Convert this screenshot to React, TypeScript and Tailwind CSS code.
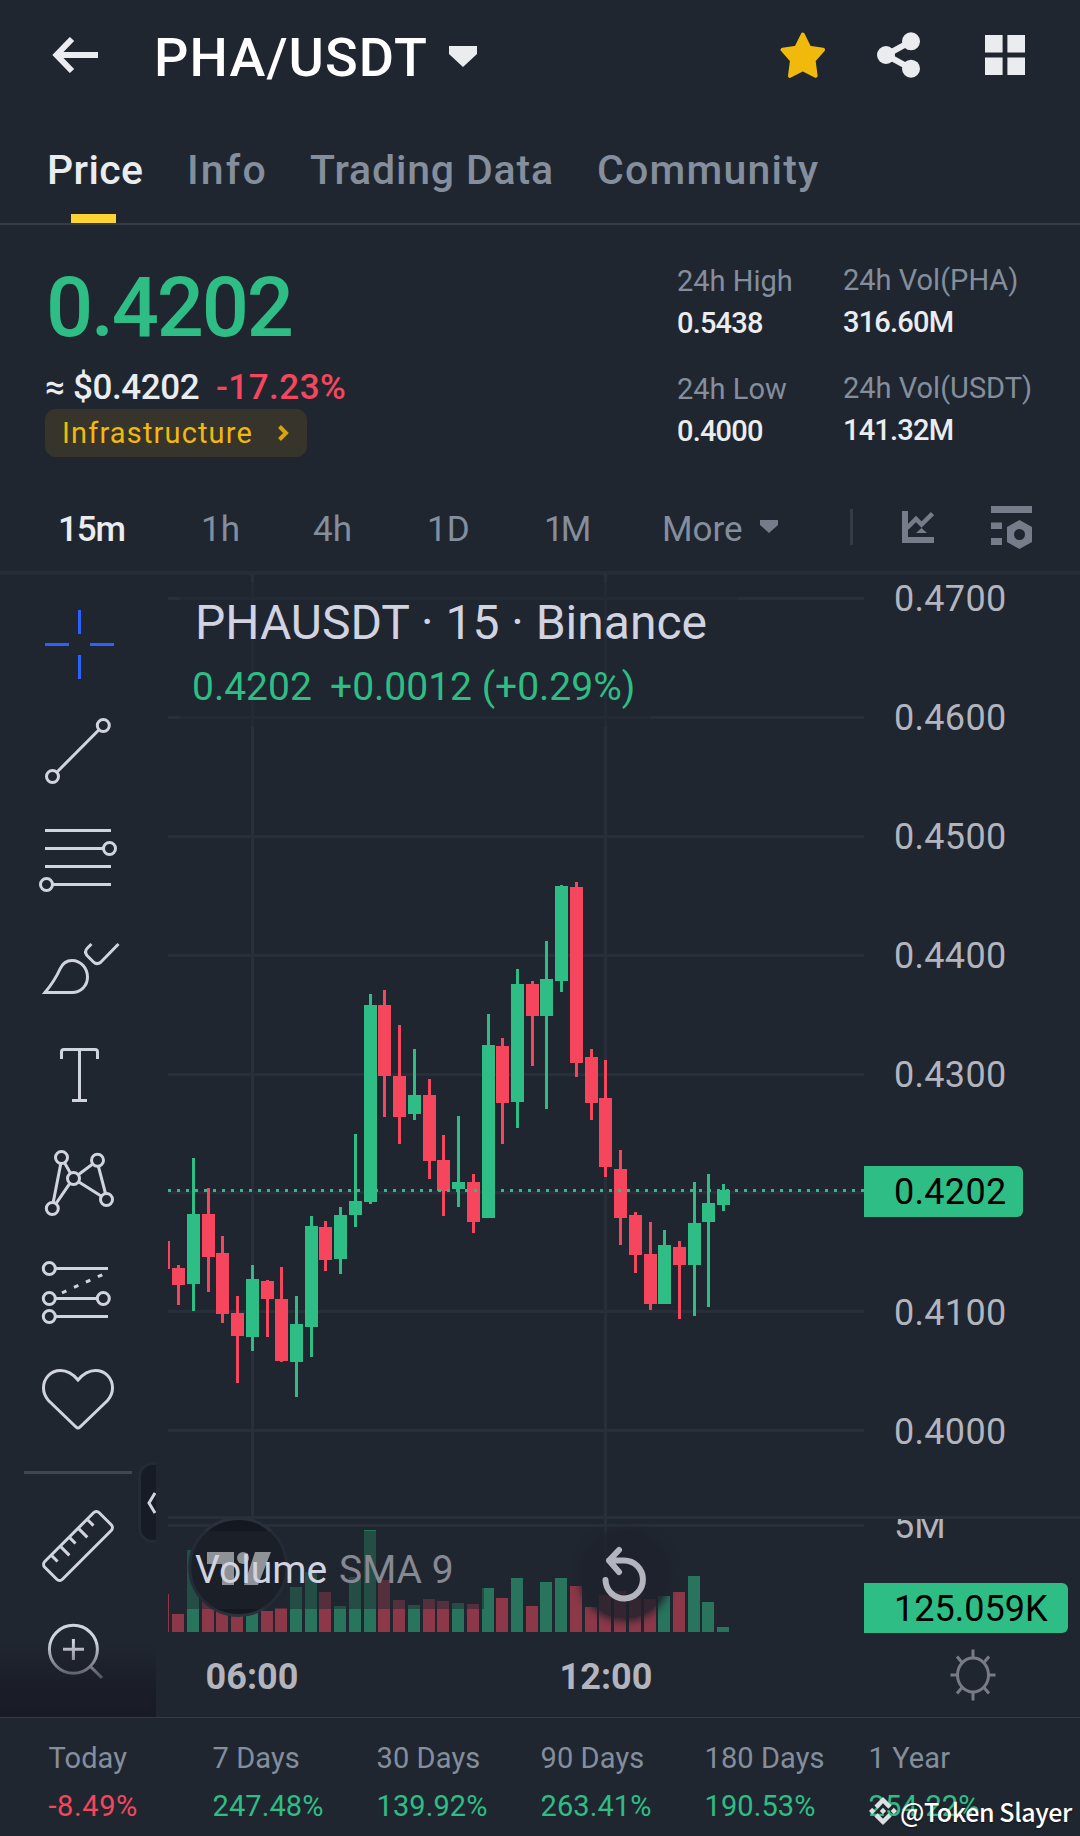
import React, { useState } from 'react';
import { SiBinance } from 'react-icons/si';

const UP = '#2ebd85';
const DOWN = '#f6465d';

const tabs = [
  { label: 'Price', className: 'w-[140px] tracking-[0.37px]' },
  { label: 'Info', className: 'w-[123px] tracking-[2.2px]' },
  { label: 'Trading Data', className: 'w-[287px] tracking-[0.84px]' },
  { label: 'Community', className: 'tracking-[1.23px]' },
];

const intervals = [
  { label: '15m', className: 'w-[143px] tracking-[-1.2px]' },
  { label: '1h', className: 'w-[112px]' },
  { label: '4h', className: 'w-[114px]' },
  { label: '1D', className: 'w-[117px]' },
  { label: '1M', className: 'w-[118px] tracking-[-3px]' },
  { label: 'More', className: 'w-[98px]' },
];

const stats = [
  [
    { label: '24h High', value: '0.5438' },
    { label: '24h Low', value: '0.4000' },
  ],
  [
    { label: '24h Vol(PHA)', value: '316.60M' },
    { label: '24h Vol(USDT)', value: '141.32M' },
  ],
];

const performance = [
  { label: 'Today', value: '-8.49%' },
  { label: '7 Days', value: '247.48%' },
  { label: '30 Days', value: '139.92%' },
  { label: '90 Days', value: '263.41%' },
  { label: '180 Days', value: '190.53%' },
  { label: '1 Year', value: '254.22%' },
];

const priceTicks = ['0.4700', '0.4600', '0.4500', '0.4400', '0.4300', '0.4202', '0.4100', '0.4000'];
const LAST_PRICE = '0.4202';

// x, high, body top, body bottom, low, volume top, rising
type Candle = [number, number, number, number, number, number, boolean];

const candles: Candle[] = [
  [178.5, 1265, 1268, 1285, 1305, 1614, false],
  [193.5, 1158, 1214, 1284, 1311, 1550, true],
  [208.5, 1188, 1214, 1257, 1292, 1598, false],
  [222.5, 1236, 1253, 1314, 1323, 1610, false],
  [237.5, 1296, 1313, 1336, 1383, 1614, false],
  [252.5, 1265, 1279, 1337, 1351, 1611, true],
  [267.5, 1280, 1281, 1299, 1337, 1611, false],
  [281.5, 1267, 1299, 1361, 1362, 1608, false],
  [296.5, 1296, 1324, 1362, 1397, 1587, true],
  [311.5, 1216, 1226, 1327, 1357, 1572, true],
  [325.5, 1221, 1227, 1260, 1271, 1592, false],
  [340.5, 1207, 1215, 1259, 1274, 1606, true],
  [355.5, 1134, 1201, 1215, 1227, 1577, true],
  [370.5, 994, 1005, 1202, 1204, 1530, true],
  [384.5, 990, 1005, 1076, 1117, 1580, false],
  [399.5, 1025, 1076, 1117, 1144, 1600, false],
  [414.5, 1049, 1095, 1114, 1120, 1605, true],
  [429.5, 1079, 1095, 1161, 1179, 1599, false],
  [443.5, 1135, 1160, 1191, 1216, 1601, false],
  [458.5, 1116, 1182, 1189, 1207, 1603, true],
  [473.5, 1174, 1182, 1222, 1233, 1604, false],
  [488.5, 1014, 1045, 1218, 1218, 1588, true],
  [502.5, 1038, 1046, 1103, 1144, 1598, false],
  [517.5, 969, 984, 1102, 1128, 1578, true],
  [532.5, 981, 984, 1016, 1066, 1606, false],
  [546.5, 941, 979, 1016, 1109, 1582, true],
  [561.5, 885, 886, 981, 992, 1578, true],
  [576.5, 882, 887, 1063, 1077, 1586, false],
  [591.5, 1049, 1057, 1103, 1120, 1607, false],
  [605.5, 1060, 1098, 1167, 1177, 1595, false],
  [620.5, 1150, 1169, 1218, 1245, 1591, false],
  [635.5, 1212, 1215, 1255, 1273, 1598, false],
  [650.5, 1222, 1254, 1304, 1310, 1599, false],
  [664.5, 1230, 1245, 1304, 1304, 1596, true],
  [679.5, 1241, 1247, 1265, 1319, 1592, false],
  [694.5, 1182, 1223, 1265, 1316, 1576, true],
  [708.5, 1174, 1203, 1222, 1307, 1602, true],
  [723.5, 1184, 1190, 1205, 1211, 1627, true],
];

const gridRows = [597, 716, 835, 954, 1073, 1191, 1310, 1429];
const gridCols = [251, 604];

const Caret = ({ className }: { className: string }) => (
  <svg viewBox="0 0 28 21" preserveAspectRatio="none" className={className} fill="currentColor">
    <path d="M0 0H28V8L14 21 0 8Z" />
  </svg>
);

const Header = () => (
  <header className="flex h-[110px] items-center text-[#eaecef]">
    <svg viewBox="0 0 46 36" className="ml-[52px] h-[36px] w-[46px]" fill="none" stroke="currentColor" strokeWidth="6">
      <path d="M46 18H5M20 2 4.5 18 20 34" />
    </svg>
    <h1 className="ml-[56px] w-[295px] pt-[6px] text-[54px] font-medium leading-none tracking-[1.12px] text-white">PHA/USDT</h1>
    <Caret className="mt-[2px] h-[21px] w-[28px]" />
    <svg viewBox="0 0 46 48" className="ml-[303px] h-[48px] w-[46px] text-[#f0b90b]" fill="currentColor" stroke="currentColor" strokeWidth="4" strokeLinejoin="round">
      <path d="M22.8 3.5 29.2 16.7 43 18.7 33.6 29.5 35.6 44.8 22.8 38.2 10 44.8 12 29.5 2.6 18.7 16.4 16.7Z" />
    </svg>
    <svg viewBox="0 0 43 46" className="ml-[51px] h-[46px] w-[43px]" fill="currentColor">
      <path d="M34 9.3 9 23 34 36.7" fill="none" stroke="currentColor" strokeWidth="6" />
      <circle cx="9" cy="23" r="9" />
      <circle cx="34" cy="9.3" r="9" />
      <circle cx="34" cy="36.7" r="9" />
    </svg>
    <svg viewBox="0 0 40 40" className="ml-[65px] h-[40px] w-[40px]" fill="currentColor">
      <path d="M0 0h17.6v17.6H0zM22.4 0H40v17.6H22.4zM0 22.4h17.6V40H0zM22.4 22.4H40V40H22.4z" />
    </svg>
  </header>
);

const Tabs = () => {
  const [active, setActive] = useState('Price');
  return (
    <nav className="flex h-[115px] whitespace-nowrap border-b-2 border-[#333b47] pl-[47px] text-[41px] font-medium">
      {tabs.map(({ label, className }) => (
        <button
          key={label}
          onClick={() => setActive(label)}
          className={`relative pt-[8px] text-left ${className} ${active === label ? 'text-[#eaecef]' : 'text-[#848e9c]'}`}
        >
          {label}
          {active === label && <span className="absolute bottom-0 left-[24px] h-[9px] w-[45px] bg-[#fcd535]" />}
        </button>
      ))}
    </nav>
  );
};

const PriceSummary = () => (
  <section className="flex h-[262px]">
    <div className="w-[677px] shrink-0 pl-[45px] pt-[33px] font-medium">
      <div className="h-[107px] pl-px text-[83px] leading-[100px] tracking-[-2.2px] text-[#2ebd85]">0.4202</div>
      <div className="flex h-[44px] text-[35px] leading-[45px]">
        <span className="w-[28px] text-[#eaecef]">≈</span>
        <span className="w-[143px] tracking-[-0.4px] text-[#eaecef]">$0.4202</span>
        <span className="tracking-[0.47px] text-[#f6465d]">-17.23%</span>
      </div>
      <button className="flex h-[48px] w-[262px] items-center rounded-[11px] bg-[#37342c] pl-[17px] text-[29px] font-normal tracking-[1.15px] text-[#f0b90b]">
        <span className="pt-[2px]">Infrastructure</span>
        <svg viewBox="0 0 11 16" className="ml-[25px] h-[16px] w-[11px]" fill="none" stroke="#d6a410" strokeWidth="4">
          <path d="M1.5 1.5 8 8 1.5 14.5" />
        </svg>
      </button>
    </div>
    {stats.map((column, i) => (
      <div key={i} className={`flex w-[166px] shrink-0 flex-col gap-[24px] whitespace-nowrap text-[29px] leading-[42px] ${i === 0 ? 'pt-[35px]' : 'pt-[34px]'}`}>
        {column.map(({ label, value }) => (
          <dl key={label}>
            <dt className="text-[#848e9c]">{label}</dt>
            <dd className="font-medium tracking-[-0.8px] text-[#eaecef]">{value}</dd>
          </dl>
        ))}
      </div>
    ))}
  </section>
);

const IntervalBar = () => {
  const [interval, setActiveInterval] = useState('15m');
  return (
    <div className="flex h-[88px] items-center border-b-4 border-[#262d37] pl-[58px] text-[35px] text-[#848e9c]">
      {intervals.map(({ label, className }) => (
        <button
          key={label}
          onClick={() => setActiveInterval(label)}
          className={`pt-[2px] text-left ${className} ${interval === label ? 'font-medium text-[#eaecef]' : ''}`}
        >
          {label}
        </button>
      ))}
      <Caret className="mb-[6px] h-[13px] w-[18px] text-[#767c89]" />
      <div className="mb-[5px] ml-[72px] h-[36px] w-[3px] bg-[#333b47]" />
      <svg viewBox="0 0 32 32" className="mb-[5px] ml-[49px] h-[32px] w-[32px] text-[#767c89]" fill="currentColor">
        <path d="M0 0h6v26h26v6H0zM14 22h11l-5.500-5z" />
        <path d="M5 17 14 8 19.500 13.500 30.500 2.500" fill="none" stroke="currentColor" strokeWidth="4.500" />
      </svg>
      <svg viewBox="0 0 41 43" className="mb-[4px] ml-[57px] h-[43px] w-[41px] text-[#767c89]" fill="currentColor">
        <path d="M0 0h41v7H0zM0 16.500h11v6.500H0zM0 32h11v7H0z" />
        <path fillRule="evenodd" d="M28.500 14 41 21v15l-12.500 7L16 36V21zM28.500 23a5.500 5.500 0 1 0 0 11 5.500 5.500 0 0 0 0-11z" />
      </svg>
    </div>
  );
};

const ToolIcon = ({ children, className = '' }: { children: React.ReactNode; className?: string }) => (
  <svg viewBox="0 0 156 108" className={`h-[108px] w-[156px] shrink-0 ${className}`} fill="none" stroke="currentColor" strokeWidth="3">
    {children}
  </svg>
);

const Toolbar = () => (
  <aside className="relative flex w-[156px] flex-col overflow-hidden pt-[16px] text-[#d1d4dc]">
    <ToolIcon className="text-[#2962ff]">
      <path d="M79.500 19v24M79.500 64v24M45 53.500h24M90 53.500h24" />
    </ToolIcon>
    <ToolIcon>
      <path d="M56.800 73.200 99 30.800" />
      <circle cx="103.300" cy="26.500" r="6" />
      <circle cx="52.500" cy="77.500" r="6" />
    </ToolIcon>
    <ToolIcon>
      <path d="M45 23.500h66M45 41.500h58M45 59.500h66M53 77.500h58" />
      <circle cx="109.500" cy="41.500" r="6" />
      <circle cx="46.500" cy="77.500" r="6" />
    </ToolIcon>
    <ToolIcon>
      <path d="M45 77.500h27c9 0 15.500-7 15.500-15.500S81 45.500 72 45.500c-6 0-9.500 3-12 8.500-3.500 8-8 15-15 23.500z" />
      <path d="M91.500 29 87.500 33c-2.500 2.500-2.500 5-.5 7.500l6.500 6.500c2 2 5 2 7.500 0L118.500 29" />
    </ToolIcon>
    <ToolIcon>
      <path d="M61.500 36v-7q0-2.500 2.500-2.500h31q2.500 0 2.500 2.500v7M79.500 26.500v51M72 77.500h15" />
    </ToolIcon>
    <ToolIcon>
      <path d="M60.800 32.500 53.200 71.500M64.500 31.800 70.500 42.300M69.800 52.300 56 72.700M78.300 43.800 92.700 33M98.400 35.300 105.500 62.500M78.500 50.800 101.500 65.200" />
      <circle cx="61.500" cy="26.500" r="6" />
      <circle cx="97.500" cy="29.300" r="6" />
      <circle cx="73.500" cy="47.500" r="6" />
      <circle cx="106.500" cy="68.500" r="6" />
      <circle cx="52.300" cy="77.500" r="6" />
    </ToolIcon>
    <ToolIcon>
      <path d="M55.500 29.500H108M55.500 59.500H97.500M55.500 77.500H108" />
      <path d="M62 53.800 104 35" strokeDasharray="4.800 8.300" />
      <circle cx="49.300" cy="29.500" r="6" />
      <circle cx="49.300" cy="59.500" r="6" />
      <circle cx="103.300" cy="59.500" r="6" />
      <circle cx="49.300" cy="77.500" r="6" />
    </ToolIcon>
    <ToolIcon>
      <path d="M78 33C73 27 67.500 23.500 60.500 23.500c-9.500 0-17 7.500-17 17.500 0 5 2 9 5 12.500L76 80q2 2 4 0l27.500-26.500c3-3.500 5-7.500 5-12.500 0-10-7.500-17.500-17-17.500C88.500 23.500 83 27 78 33z" />
    </ToolIcon>
    <div className="ml-[24px] mt-[16px] h-[3px] w-[108px] shrink-0 bg-[#434651]" />
    <ToolIcon className="mt-[17px]">
      <g transform="translate(78 55) rotate(-45)">
        <rect x="-38.500" y="-12.500" width="77" height="25" rx="4" />
        <path d="M-25.400-12.500v9M-12.700-12.500v13M0-12.500v9M12.700-12.500v13M25.400-12.500v9" />
      </g>
    </ToolIcon>
    <ToolIcon>
      <circle cx="73.400" cy="50.300" r="24" />
      <path d="M73.400 40v21M63 50.300h21M90.500 67.500 102 79" />
    </ToolIcon>
    {/* scroll fade and collapse handle lie over the tools */}
    <div className="absolute inset-x-0 bottom-0 h-[76px] bg-gradient-to-t from-[#181b25] via-[#181b25]/70 to-transparent" />
    <button className="absolute left-[138px] top-[887px] h-[81px] w-[30px] rounded-l-[15px] border-[3px] border-[#242b35] bg-[#171b25]">
      <svg viewBox="0 0 10 22" className="ml-[5px] h-[22px] w-[10px]" fill="none" stroke="currentColor" strokeWidth="3">
        <path d="M9 1 3 11l6 10" />
      </svg>
    </button>
  </aside>
);

const PricePlot = () => (
  <svg viewBox="168 575 696 941" className="absolute inset-0 h-[941px] w-[696px]" shapeRendering="crispEdges">
    <g fill="#292f3a">
      {gridRows.map((y) => <rect key={y} x="168" y={y} width="696" height="3" />)}
      {gridCols.map((x) => <rect key={x} x={x} y="575" width="3" height="941" />)}
    </g>
    <rect x="168" y="1241" width="2" height="28" fill={DOWN} />
    {candles.map(([x, high, top, bottom, low, , rising]) => (
      <g key={x} fill={rising ? UP : DOWN}>
        <rect x={x - 1.5} y={high} width="3" height={low - high} />
        <rect x={x - 6.5} y={top} width="13" height={bottom - top} />
      </g>
    ))}
    <path d="M168 1190.500H864" stroke={UP} strokeWidth="3" strokeDasharray="3 6" />
  </svg>
);

const VolumePlot = () => (
  <svg viewBox="168 1519 696 114" className="absolute inset-0 h-[114px] w-[696px]">
    <g fill="#292f3a" shapeRendering="crispEdges">
      <rect x="168" y="1524" width="696" height="3" />
      {gridCols.map((x) => <rect key={x} x={x} y="1519" width="3" height="113" />)}
    </g>
    <g shapeRendering="crispEdges">
      <rect x="168" y="1594" width="1" height="38" fill="#8c3848" />
      {candles.map(([x, , , , , top, rising]) => (
        <rect key={x} x={x - 6.5} y={top} width="12" height={1632 - top} fill={rising ? '#28745c' : '#8c3848'} />
      ))}
    </g>
    <circle cx="238.300" cy="1567" r="48.500" fill="#141821" stroke="#2a313b" strokeWidth="3" />
    <path d="M207 1552h27v33h-12v-21h-15zM255 1552h16l-13 33h-14z" fill="#fff" />
    <circle cx="243" cy="1558" r="6" fill="#fff" />
  </svg>
);

const Chart = () => (
  <main className="ml-[12px] flex w-[912px] flex-col">
    <div className="flex h-[944px] border-b-[3px] border-[#292f3a]">
      <div className="relative w-[696px] pl-[12px] pt-[8px]">
        <PricePlot />
        <div className="relative h-[78px] w-[557px] bg-[#202630]/50 pl-[15px] text-[48px] leading-[80px] text-[#d1d4e0]">
          PHAUSDT · 15 · Binance
        </div>
        <div className="relative flex h-[66px] w-[470px] whitespace-nowrap bg-[#202630]/50 pl-[12px] text-[39px] leading-[52px] text-[#2ebd85]">
          <span className="w-[138px]">0.4202</span>
          <span>+0.0012 (+0.29%)</span>
        </div>
      </div>
      <div className="flex h-[881px] w-[216px] flex-col justify-between text-[36px] tracking-[0.3px] text-[#b2b5be]">
        {priceTicks.map((tick) => (
          <div key={tick} className="flex h-[48px] items-center">
            {tick === LAST_PRICE ? (
              <span className="mb-[6px] h-[51px] w-[159px] shrink-0 rounded-r-[6px] bg-[#2ebd85] pl-[30px] leading-[53px] text-black">{tick}</span>
            ) : (
              <span className="pl-[30px] leading-[48px]">{tick}</span>
            )}
          </div>
        ))}
      </div>
    </div>
    <div className="flex h-[114px]">
      <div className="relative w-[696px] pl-[12px] pt-[12px]">
        <VolumePlot />
        <div className="relative flex h-[78px] w-[304px] items-center bg-[#202630]/50 pl-[15px] text-[39px] text-[#d1d4e0]">
          <span className="w-[144px]">Volume</span>
          <span className="text-[#868993]">SMA 9</span>
        </div>
        <button className="absolute left-[413px] top-[12px] h-[88px] w-[88px] rounded-full bg-[#1e222c]/80 shadow-[0_0_8px_2px_#1e222c]">
          <svg viewBox="0 0 88 88" className="h-[88px] w-[88px]" fill="none" stroke="#b2b5be" strokeWidth="6" strokeLinecap="round" strokeLinejoin="round">
            <path d="M24.500 49A18.700 19 0 1 0 43 29.500H28M38 19 28 29.500 38 41" />
          </svg>
        </button>
      </div>
      <div className="w-[216px] text-[36px] text-[#b2b5be]">
        <div className="h-[64px] overflow-hidden">
          <div className="-mt-[17px] pl-[30px] leading-[48px]">5M</div>
        </div>
        <div className="h-[50px] w-[204px] rounded-r-[6px] bg-[#2ebd85] pl-[30px] leading-[53px] text-black">125.059K</div>
      </div>
    </div>
    <div className="flex h-[84px] items-center text-[36px] font-bold text-[#b2b5be]">
      <span className="w-[168px] pt-[3px] text-center">06:00</span>
      <span className="ml-[186px] w-[168px] pt-[3px] text-center">12:00</span>
      <svg viewBox="0 0 46 52" className="ml-[260px] h-[52px] w-[46px]" fill="none" stroke="#787b86" strokeWidth="3">
        <ellipse cx="23" cy="26" rx="15.500" ry="17" />
        <path d="M23 0.500v8M23 43.500v8M0.500 26h7M38.500 26h7M7 7.500l5 6M39 7.500l-5 6M7 44.500l5-6M39 44.500l-5-6" />
      </svg>
    </div>
  </main>
);

const Performance = () => (
  <footer className="flex h-[119px] border-t border-[#333b47] pl-[48.500px] pt-[16px] text-[29px] leading-[48px] text-[#848e9c]">
    {performance.map(({ label, value }) => (
      <div key={label} className="w-[164px] shrink-0 tracking-[0.1px]">
        <div>{label}</div>
        <div className={value.startsWith('-') ? 'tracking-[0.6px] text-[#f6465d]' : 'text-[#2ebd85]'}>{value}</div>
      </div>
    ))}
  </footer>
);

export default function App() {
  return (
    <div className="relative h-[1836px] w-[1080px] overflow-hidden bg-[#202630] font-['Roboto',sans-serif]">
      <Header />
      <Tabs />
      <PriceSummary />
      <IntervalBar />
      <div className="flex h-[1142px]">
        <Toolbar />
        <Chart />
      </div>
      <Performance />
      <div className="absolute left-[869px] top-[1793px] flex items-center whitespace-nowrap font-['Noto_Sans_CJK_SC',sans-serif] text-[25px] font-medium leading-[36px] tracking-[-0.4px] text-white [text-shadow:0_1px_2px_#00000080]">
        <SiBinance className="mr-[3px] h-[28px] w-[28px] text-[#dcdfe3]" />
        @Token Slayer
      </div>
    </div>
  );
}
